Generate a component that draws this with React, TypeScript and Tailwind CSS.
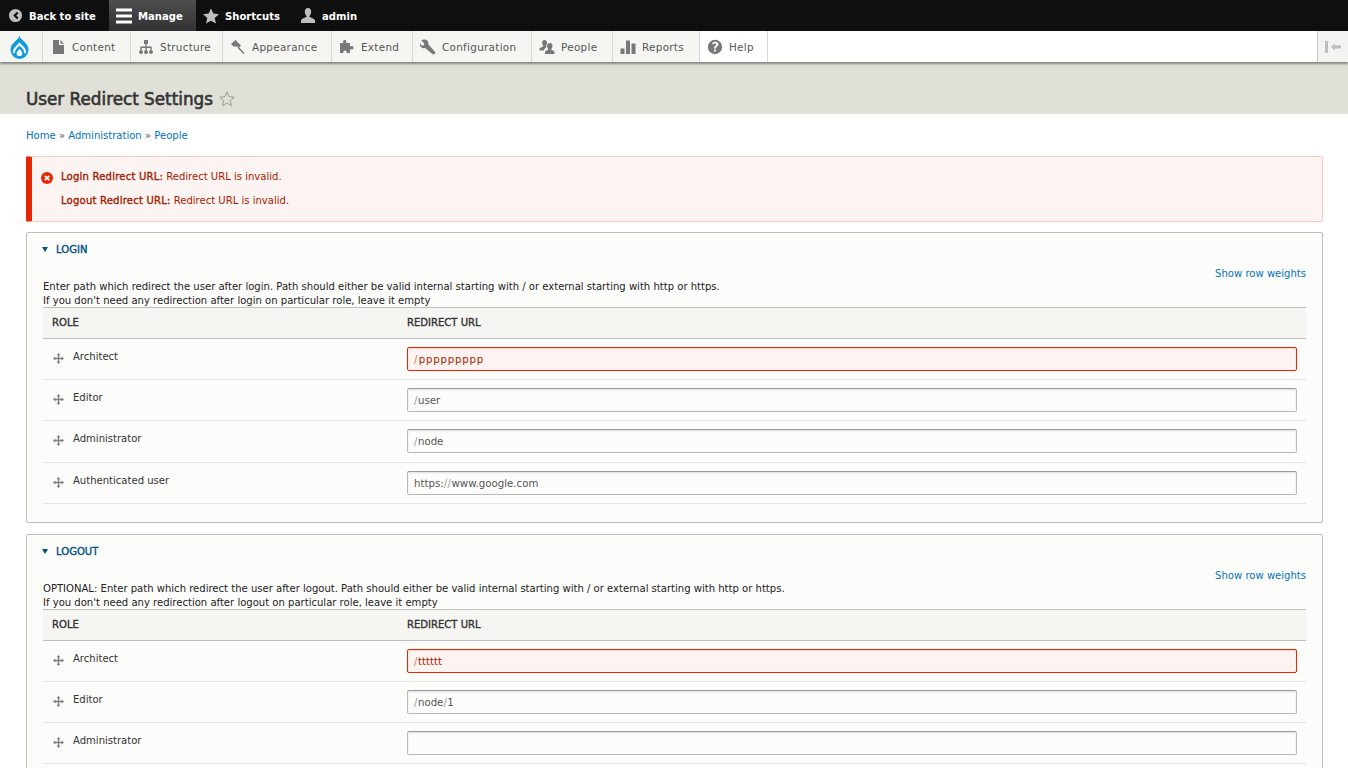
import React from 'react';

const toolbarIcon = 'w-4 h-4 shrink-0 fill-[#787878]';
const fakeBold = 'font-normal [-webkit-text-stroke:0.35px_currentColor]';

const BackIcon = () => (
  <svg viewBox="0 0 16 16" className="w-[15px] h-[15px] fill-[#bebebe]">
    <path d="M8 1a7 7 0 1 0 0 14A7 7 0 0 0 8 1zm1.600 3 1.600 1.600L8.800 8l2.400 2.400L9.600 12l-4-4z" fillRule="evenodd" />
  </svg>
);
const MenuIcon = () => (
  <svg viewBox="0 0 16 16" className="w-[16px] h-[16px] fill-white">
    <path d="M0 0.500h16v3H0zM0 6.500h16v3H0zM0 12.500h16v3H0z" />
  </svg>
);
const StarIcon = () => (
  <svg viewBox="0 0 16 16" className="w-[16px] h-[16px] fill-[#bebebe]">
    <path d="M8 .4l2.300 5.200 5.700.6-4.300 3.800 1.300 5.600L8 12.700l-5 2.900 1.300-5.600L0 6.200l5.700-.6z" />
  </svg>
);
const UserIcon = () => (
  <svg viewBox="0 0 16 16" className="w-[16px] h-[16px] fill-[#bebebe]">
    <path d="M8 0c2 0 3.200 1.500 3.200 3.700 0 1.600-.7 3.100-1.500 4-.5.6-.3 1.300.4 1.600 1.800.7 4.400 1.500 4.900 3.200V15H1v-2.500c.5-1.700 3.100-2.500 4.900-3.200.7-.3.900-1 .4-1.600-.8-.9-1.500-2.400-1.500-4C4.800 1.500 6 0 8 0z" />
  </svg>
);
const DrupalLogo = () => (
  <svg viewBox="0 0 20 25" className="w-[19px] h-[24px] mr-[3px]">
    <path d="M10 .5c.6 3 3 4.600 5 6.500 2.500 2.300 4.500 5 4.500 8.500a9.500 9.500 0 0 1-19 0C.5 12 2.500 9.300 5 7c2-1.900 4.400-3.500 5-6.500z" fill="#0e9be0" />
    <path d="M4.300 19c-1.400-4.500 3.200-6.600 5.700-9.700 2.500 3.100 7.100 5.200 5.700 9.700" fill="none" stroke="#f5f5f2" strokeWidth="2.300" />
    <path d="M10 14.500c1.500 1.600 3 3 3 4.600a3 3 0 0 1-6 0c0-1.600 1.500-3 3-4.600z" fill="#f5f5f2" />
  </svg>
);
const ContentIcon = () => (
  <svg viewBox="0 0 16 16" className={toolbarIcon}>
    <path d="M3 1h6v5h5v9H3zM10.500 1l3.500 3.700h-3.500z" />
  </svg>
);
const StructureIcon = () => (
  <svg viewBox="0 0 16 16" className={toolbarIcon}>
    <path d="M6 1h4v4H8.700v2.500h5V11.200a2 2 0 1 1-1.400 0V9H8.700v2.200a2 2 0 1 1-1.400 0V9H3.700v2.200a2 2 0 1 1-1.400 0V7.500h5V5H6z" />
  </svg>
);
const AppearanceIcon = () => (
  <svg viewBox="0 0 16 16" className={toolbarIcon}>
    <path d="M5.500 1l5.500 5.500-2.500 2.500L7 7.600 3.500 7.400 1 5zM8.800 7.900l5.700 6-1.100 1.100-5.700-5.900z" />
  </svg>
);
const ExtendIcon = () => (
  <svg viewBox="0 0 16 16" className={toolbarIcon}>
    <path d="M1 4h3.500c-1-1.700-.3-3 1.200-3s2.200 1.300 1.300 3H11v3.500c1.700-1 3.500-.6 3.500 1.200s-1.800 2.200-3.500 1.200V14H7.500c.6-1.500 0-2.500-1.500-2.500S4 12.500 4.500 14H1z" />
  </svg>
);
const ConfigIcon = () => (
  <svg viewBox="0 0 16 16" className={toolbarIcon}>
    <path d="M5 .6a4 4 0 0 0-3.700 1.200l3 2.500-.4 2-2 .5L-.1 4a4 4 0 0 0 5.100 5l7.700 6.300c1 .7 3.200-1.300 2.400-2.400L8.300 5.200A4 4 0 0 0 5 .6z" />
  </svg>
);
const PeopleIcon = () => (
  <svg viewBox="0 0 16 16" className={toolbarIcon}>
    <path d="M5.500 1C7 1 8 2.300 8 4c0 .9-.3 1.800-.8 2.500-.3 1 .2 1 .2 1.500-1.300 1-2 1.500-2.400 3.500H.5V9.700C1 8.500 3 8 4 7.500c.3-.4.300-.8 0-1.200C3.500 5.700 3.100 4.900 3.100 4 3.100 2.300 4 1 5.500 1zM11 4c1.500 0 2.500 1.300 2.500 3 0 1-.4 2-1 2.700-.3.500-.2 1 .3 1.200 1.200.6 2.500 1 2.700 2.100V15H6v-2c.2-1.100 1.500-1.500 2.700-2.100.5-.2.600-.7.300-1.200-.6-.7-1-1.700-1-2.700C8 5.300 9.500 4 11 4z" />
  </svg>
);
const ReportsIcon = () => (
  <svg viewBox="0 0 16 16" className={toolbarIcon}>
    <path d="M.5 9.500h4V15h-4zM6 1.500h4V15H6zM11.500 4.500h4V15h-4z" />
  </svg>
);
const HelpIcon = () => (
  <svg viewBox="0 0 16 16" className={toolbarIcon}>
    <path fillRule="evenodd" d="M8 .8a7.200 7.200 0 1 0 0 14.400A7.200 7.200 0 0 0 8 .8zM7 12.500v-2h2v2zM9 9.500H7V8.700c0-1.700 2.200-1.900 2.200-3.200 0-.6-.5-1-1.200-1-.7 0-1.300.4-1.800 1L4.900 4.300C5.700 3.300 6.800 2.700 8.200 2.700c1.900 0 3.200 1 3.200 2.700C11.400 7.500 9 7.700 9 9z" />
  </svg>
);
const CollapseIcon = () => (
  <svg viewBox="0 0 16 12" className="w-[16px] h-[12px] fill-[#bdbdbd]">
    <path d="M0 0h3v12H0zM6 6l4-3.500V4.500h6v3h-6v2z" />
  </svg>
);
const DragHandle = () => (
  <svg viewBox="0 0 13 13" className="w-[11px] h-[11px] fill-[#7d7d7d] shrink-0">
    <path d="M6.500 0l2.300 2.800H7.300v2.900h2.900V4.200L13 6.500l-2.800 2.300V7.300H7.300v2.900h1.500L6.500 13l-2.300-2.800h1.500V7.300H2.800v1.500L0 6.500l2.800-2.300v1.500h2.900V2.800H4.200z" />
  </svg>
);

const adminTabs = [
  { label: 'Back to site', icon: <BackIcon />, w: 'w-[109px] pl-[8px] gap-[6px]' },
  { label: 'Manage', icon: <MenuIcon />, w: 'w-[87px] pl-[7px] gap-[6px] bg-gradient-to-b from-[#4e4e4e] to-[#323232]' },
  { label: 'Shortcuts', icon: <StarIcon />, w: 'w-[97px] pl-[7px] gap-[6px]' },
  { label: 'admin', icon: <UserIcon />, w: 'w-[80px] pl-[7px] gap-[6px]' },
];

const menuItems = [
  { label: 'Content', icon: <ContentIcon />, w: 'w-[88px]' },
  { label: 'Structure', icon: <StructureIcon />, w: 'w-[92px]' },
  { label: 'Appearance', icon: <AppearanceIcon />, w: 'w-[109px]' },
  { label: 'Extend', icon: <ExtendIcon />, w: 'w-[81px]' },
  { label: 'Configuration', icon: <ConfigIcon />, w: 'w-[119px]' },
  { label: 'People', icon: <PeopleIcon />, w: 'w-[81px]' },
  { label: 'Reports', icon: <ReportsIcon />, w: 'w-[87px]' },
  { label: 'Help', icon: <HelpIcon />, w: 'w-[68px]' },
];

type Row = { role: string; value: string; error?: boolean; wide?: boolean; h: string };

// the slashes are lighter and spaced out in the original font
const UrlValue = ({ value }: { value: string }) => (
  <>
    {value.split(/(\/)/).map((part, i) =>
      part === '/' ? (
        <span key={i} className="opacity-60 mr-[0.5px]">/</span>
      ) : (
        <span key={i}>{part}</span>
      )
    )}
  </>
);

const RoleTable = ({ rows }: { rows: Row[] }) => (
  <div className="w-full">
    <div className={`flex h-[32px] items-center bg-[#f5f5f2] border-y border-[#bfbfba] text-[#333] uppercase ${fakeBold}`}>
      <div className="w-[355px] pl-[9px]">Role</div>
      <div className="flex-1 pl-[9px]">Redirect URL</div>
    </div>
    {rows.map((row) => (
      <div key={row.role} className={`flex items-start border-b border-[#e6e4df] ${row.h}`}>
        <div className="w-[355px] flex items-center pl-[10px] pt-[12px] gap-[9px]">
          <DragHandle />
          <span className="text-[#333] relative top-[-2px]">{row.role}</span>
        </div>
        <div className="flex-1 pl-[9px] pr-[9px] pt-[8px]">
          <div
            className={`h-[24px] flex items-center pl-[6px] pt-[1px] rounded-[2px] border text-[10.2px] ${
              row.error
                ? 'border-[#e62600] bg-[#fdf3f1] text-[#a51b00] shadow-[inset_0_1px_2px_rgba(0,0,0,0.1)]'
                : 'border-[#b8b8b8] border-t-[#999] bg-[#fcfcfa] text-[#555] shadow-[inset_0_1px_2px_rgba(0,0,0,0.12)]'
            } ${row.wide ? 'tracking-[0.8px]' : ''}`}
          >
            <UrlValue value={row.value} />
          </div>
        </div>
      </div>
    ))}
  </div>
);

const Section = ({ title, intro, rows, mb }: { title: string; intro: string; rows: Row[]; mb: string }) => (
  <div className={`border border-[#bebfb9] rounded-[2px] bg-[#fcfcfa] ${mb}`}>
    <div className="h-[33px] flex items-center pl-[15px] gap-[8px]">
      <span className="w-0 h-0 border-x-[3px] border-x-transparent border-t-[5px] border-t-[#004f80]" />
      <span className={`uppercase text-[#004f80] ${fakeBold}`}>{title}</span>
    </div>
    <div className="px-[16px] pb-[18px]">
      <div className="text-right text-[#0074bd] h-[14px] leading-[14px] relative top-[1px]">Show row weights</div>
      <div className="text-[#222] mt-[-1px] leading-[14px] relative top-[1px]">
        <p>{intro}</p>
        <p>If you don't need any redirection after {title.toLowerCase()} on particular role, leave it empty</p>
      </div>
      <RoleTable rows={rows} />
    </div>
  </div>
);

const loginRows: Row[] = [
  { role: 'Architect', value: '/ppppppppp', error: true, wide: true, h: 'h-[41px]' },
  { role: 'Editor', value: '/user', h: 'h-[41px]' },
  { role: 'Administrator', value: '/node', h: 'h-[42px]' },
  { role: 'Authenticated user', value: 'https://www.google.com', h: 'h-[41px]' },
];

const logoutRows: Row[] = [
  { role: 'Architect', value: '/tttttt', error: true, h: 'h-[41px]' },
  { role: 'Editor', value: '/node/1', h: 'h-[41px]' },
  { role: 'Administrator', value: '', h: 'h-[41px]' },
];

export default function App() {
  return (
    <div className="h-screen overflow-hidden bg-white text-[10.05px] font-['DejaVu_Sans',sans-serif] text-[#222]">
      {/* Admin bar */}
      <div className="h-[31px] bg-[#0f0f0f] flex text-white font-bold">
        {adminTabs.map((tab) => (
          <div key={tab.label} className={`h-full flex items-center ${tab.w}`}>
            {tab.icon}
            <span className="relative top-[1px]">{tab.label}</span>
          </div>
        ))}
      </div>

      {/* Manage tray */}
      <div className="h-[31px] flex bg-white relative z-10 shadow-[0_2px_2px_rgba(0,0,0,0.4)]">
        <div className="w-[43px] bg-[#f5f5f2] border-r border-[#d8d8d3] flex items-center justify-center">
          <DrupalLogo />
        </div>
        {menuItems.map((item) => (
          <div
            key={item.label}
            className={`${item.w} flex items-center pl-[7px] gap-[6px] border-r border-[#d8d8d3] text-[#565656] text-[10.4px] tracking-[0.3px] ${
              item.label === 'Help' ? 'bg-white' : 'bg-[#f5f5f2]'
            }`}
          >
            {item.icon}
            <span className="relative top-[1px]">{item.label}</span>
          </div>
        ))}
        <div className="ml-auto w-[31px] bg-[#f3f3f3] border-l border-[#c8c8c8] flex items-center justify-center">
          <CollapseIcon />
        </div>
      </div>

      {/* Page header */}
      <div className="h-[52px] bg-[#e0e0d8] pl-[26px] pt-[26px] flex items-start gap-[6px]">
        <h1 className="text-[16.8px] leading-[22px] font-normal [-webkit-text-stroke:0.6px_currentColor] text-[#333]">
          User Redirect Settings
        </h1>
        <svg viewBox="0 0 16 16" className="w-[16px] h-[16px] mt-[3px] fill-none stroke-[#9a9a8e]">
          <path d="M8 1l2.100 4.700 5.100.5-3.900 3.400 1.200 5L8 12l-4.500 2.600 1.200-5L.8 6.200l5.100-.5z" />
        </svg>
      </div>

      <div className="px-[25px] pt-[15px]">
        {/* Breadcrumb */}
        <div className="h-[13px] leading-[13px] pl-[1px] text-[#0074bd] mb-[14px]">
          Home <span className="text-[#555]">»</span> Administration <span className="text-[#555]">»</span> People
        </div>

        {/* Error message */}
        <div className="ml-[1px] h-[66px] mb-[10px] bg-[#fcf4f2] border border-[#f9c9bf] border-l-[6px] border-l-[#e62600] rounded-[2px] text-[#a51b00] pl-[9px] pt-[13px]">
          <div className="flex items-center h-[14px]">
            <svg viewBox="0 0 12 12" className="w-[12px] h-[12px] mr-[8px] shrink-0 relative top-[1px]">
              <circle cx="6" cy="6" r="6" fill="#e62600" />
              <path d="M3.800 3.800l4.400 4.400M8.200 3.800l-4.400 4.400" stroke="#fff" strokeWidth="1.800" />
            </svg>
            <span>
              <strong className={`${fakeBold} tracking-[0.2px]`}>Login Redirect URL:</strong> Redirect URL is invalid.
            </span>
          </div>
          <div className="h-[14px] leading-[14px] mt-[10px] pl-[20px]">
            <strong className={`${fakeBold} tracking-[0.2px]`}>Logout Redirect URL:</strong> Redirect URL is invalid.
          </div>
        </div>

        <div className="ml-[1px]">
          <Section
            title="Login"
            intro="Enter path which redirect the user after login. Path should either be valid internal starting with / or external starting with http or https."
            rows={loginRows}
            mb="mb-[11px]"
          />
          <Section
            title="Logout"
            intro="OPTIONAL: Enter path which redirect the user after logout. Path should either be valid internal starting with / or external starting with http or https."
            rows={logoutRows}
            mb="mb-[11px]"
          />
        </div>
      </div>
    </div>
  );
}
